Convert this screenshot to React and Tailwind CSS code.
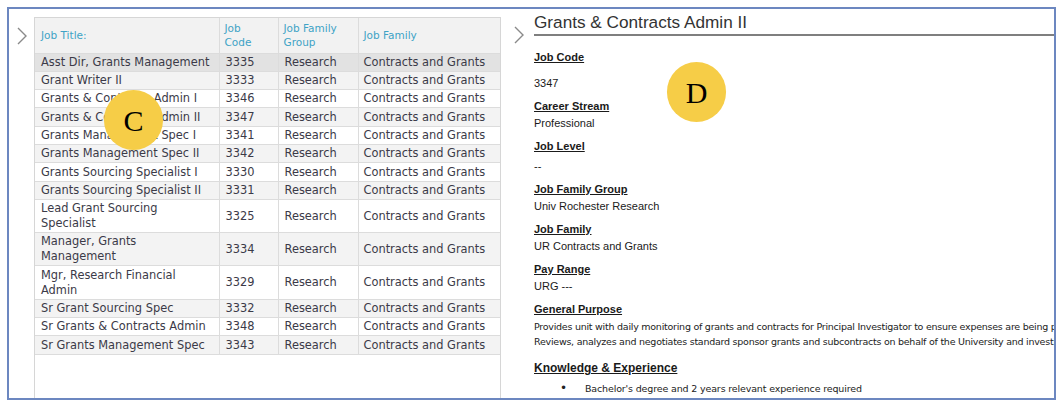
import React from "react";

const rows = [
  ["Asst Dir, Grants Management", "3335"],
  ["Grant Writer II", "3333"],
  ["Grants & Contracts Admin I", "3346"],
  ["Grants & Contracts Admin II", "3347"],
  ["Grants Management Spec I", "3341"],
  ["Grants Management Spec II", "3342"],
  ["Grants Sourcing Specialist I", "3330"],
  ["Grants Sourcing Specialist II", "3331"],
  [["Lead Grant Sourcing", "Specialist"], "3325"],
  [["Manager, Grants", "Management"], "3334"],
  [["Mgr, Research Financial", "Admin"], "3329"],
  ["Sr Grant Sourcing Spec", "3332"],
  ["Sr Grants & Contracts Admin", "3348"],
  ["Sr Grants Management Spec", "3343"],
];

function Chevron() {
  return (
    <svg width="12" height="18" viewBox="0 0 12 18">
      <polyline points="2,1 10,9 2,17" fill="none" stroke="#8a8a8a" strokeWidth="1.4" />
    </svg>
  );
}

function Badge({ letter }) {
  return (
    <div className="w-[59px] h-[60px] rounded-full bg-[#f6cd47] flex items-center justify-center text-[30px] text-black" style={{ fontFamily: '"Liberation Serif", serif' }}>
      {letter}
    </div>
  );
}

function Field({ label, value, gap = 3 }) {
  return (
    <div>
      <div className="font-bold underline text-[11px] leading-[14px]" style={{ marginBottom: gap }}>{label}</div>
      <div className="text-[11px] leading-[14px] mb-[9px]">{value}</div>
    </div>
  );
}

export default function App() {
  const cell = "border-r border-b border-[#dcdcdc] px-[6px] pt-[1.3px] pb-[1px] leading-[15px] align-middle";
  const small = { fontFamily: '"DejaVu Sans", Tahoma, sans-serif' };
  return (
    <div className="w-[1062px] h-[407px] bg-white relative pt-[7px] pl-[7px]">
      <div className="absolute left-[104px] top-[90px] z-10">
        <Badge letter="C" />
      </div>
      <div className="absolute left-[667px] top-[62px] z-10">
        <Badge letter="D" />
      </div>

      <div className="w-[1049px] h-[393px] border-2 border-[#6c87c0] flex overflow-hidden">
        {/* Left: job list */}
        <div className="flex pt-[8px] h-full">
          <div className="w-[25px] flex justify-center pt-[10px]">
            <Chevron />
          </div>
          <div className="w-[467px] h-full border-l border-r border-t border-[#d6d6d6]" style={{ fontFamily: '"DejaVu Sans", Verdana, sans-serif' }}>
            <table className="w-full border-collapse text-[11.4px] text-[#3b3a48]">
              <thead>
                <tr className="bg-[#f2f2f2] text-[#3ea3c6] text-[10.5px] h-[35px]">
                  <th className="w-[184px] border-r border-b border-[#dcdcdc] px-[6px] text-left font-normal leading-[14px]">Job Title:</th>
                  <th className="w-[59px] border-r border-b border-[#dcdcdc] px-[5px] text-left font-normal leading-[14px]">Job<br />Code</th>
                  <th className="w-[80px] border-r border-b border-[#dcdcdc] px-[5px] text-left font-normal leading-[14px]">Job Family<br />Group</th>
                  <th className="border-b border-[#dcdcdc] px-[5px] text-left font-normal leading-[14px]">Job Family</th>
                </tr>
              </thead>
              <tbody>
                {rows.map(([title, code], i) => (
                  <tr key={i} className={i === 0 ? "bg-[#e2e2e2]" : i % 2 === 1 ? "bg-[#f3f3f3]" : "bg-white"}>
                    <td className={`${cell} whitespace-nowrap`}>
                      {Array.isArray(title) ? (
                        <>
                          {title[0]}
                          <br />
                          {title[1]}
                        </>
                      ) : (
                        title
                      )}
                    </td>
                    <td className={cell}>{code}</td>
                    <td className={cell}>Research</td>
                    <td className="border-b border-[#dcdcdc] px-[5px] pt-[1.3px] pb-[1px] leading-[15px] whitespace-nowrap">Contracts and Grants</td>
                  </tr>
                ))}
              </tbody>
            </table>
          </div>
        </div>

        {/* Right: job detail */}
        <div className="flex-1 flex items-start pl-[12px] overflow-hidden" style={{ fontFamily: '"Liberation Sans", Arial, sans-serif' }}>
          <div className="w-[21px] shrink-0 pt-[17px]">
            <Chevron />
          </div>
          <div className="flex-1 whitespace-nowrap text-[#1a1a1a] pt-[3px]">
            <div className="text-[17.2px] leading-[20px] text-[#333] pb-[2px] border-b-2 border-[#7f7f7f]">Grants &amp; Contracts Admin II</div>
            <div className="pt-[14px]">
              <Field label="Job Code" value="3347" gap={12} />
              <Field label="Career Stream" value="Professional" />
              <Field label="Job Level" value="--" gap={6} />
              <Field label="Job Family Group" value="Univ Rochester Research" />
              <Field label="Job Family" value="UR Contracts and Grants" />
              <Field label="Pay Range" value="URG ---" />
              <div className="font-bold underline text-[11px] leading-[14px] mt-[2px] mb-[3px]">General Purpose</div>
              <div className="text-[9.5px] tracking-[-0.25px] leading-[15px] text-[#222]" style={small}>
                <div>Provides unit with daily monitoring of grants and contracts for Principal Investigator to ensure expenses are being paid appropriately.</div>
                <div>Reviews, analyzes and negotiates standard sponsor grants and subcontracts on behalf of the University and investigators.</div>
              </div>
              <div className="font-bold underline text-[12px] leading-[16px] mt-[11px] mb-[5px]">Knowledge &amp; Experience</div>
              <div className="text-[9.5px] tracking-[-0.15px] leading-[15px] text-[#222]" style={small}>
                <div className="flex"><span className="w-[51px] pl-[26px] text-[12px] leading-[15px]">•</span>Bachelor's degree and 2 years relevant experience required</div>
                <div className="pl-[105px] -mt-[2px]">Or an equivalent combination of education and experience</div>
              </div>
            </div>
          </div>
        </div>
      </div>
    </div>
  );
}
